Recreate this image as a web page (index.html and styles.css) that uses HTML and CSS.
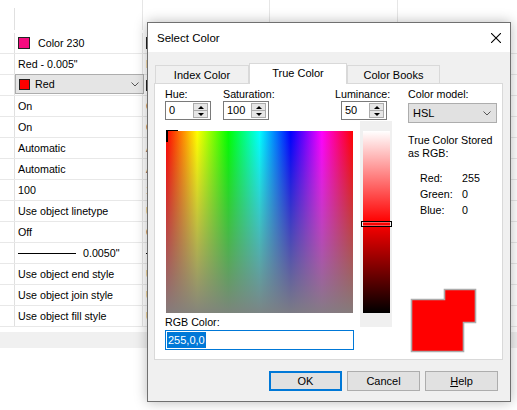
FILE: index.html
```html
<!DOCTYPE html>
<html>
<head>
<meta charset="utf-8">
<title>Select Color</title>
<link rel="stylesheet" href="styles.css">
</head>
<body>
<div class="sheet">
  <div class="head">
    <div class="hc c0"></div><div class="hc c1"></div><div class="hc c2"></div><div class="hc c3"></div><div class="hc c4"></div>
  </div>
  <div class="row"><div class="c0"></div><div class="c1"><span class="sw pink"></span>Color 230</div><div class="c2"><span class="sw pink"></span></div><div class="c3"></div><div class="c4"></div></div>
  <div class="row"><div class="c0"></div><div class="c1">Red - 0.005"</div><div class="c2">R</div><div class="c3"></div><div class="c4"></div></div>
  <div class="row"><div class="c0"></div><div class="c1 ddcell"><div class="dd"><span class="sw red"></span><span class="ddtext">Red</span><svg class="chev" width="8" height="5" viewBox="0 0 8 5"><path d="M0.5 0.5L4 4L7.5 0.5" fill="none" stroke="#555"/></svg></div></div><div class="c2"><span class="sw red"></span></div><div class="c3"></div><div class="c4"></div></div>
  <div class="row"><div class="c0"></div><div class="c1">On</div><div class="c2">O</div><div class="c3"></div><div class="c4"></div></div>
  <div class="row"><div class="c0"></div><div class="c1">On</div><div class="c2">O</div><div class="c3"></div><div class="c4"></div></div>
  <div class="row"><div class="c0"></div><div class="c1">Automatic</div><div class="c2">A</div><div class="c3"></div><div class="c4"></div></div>
  <div class="row"><div class="c0"></div><div class="c1">Automatic</div><div class="c2">A</div><div class="c3"></div><div class="c4"></div></div>
  <div class="row"><div class="c0"></div><div class="c1">100</div><div class="c2">1</div><div class="c3"></div><div class="c4"></div></div>
  <div class="row"><div class="c0"></div><div class="c1">Use object linetype</div><div class="c2">U</div><div class="c3"></div><div class="c4"></div></div>
  <div class="row"><div class="c0"></div><div class="c1">Off</div><div class="c2">O</div><div class="c3"></div><div class="c4"></div></div>
  <div class="row"><div class="c0"></div><div class="c1"><span class="lw"></span>0.0050"</div><div class="c2"><span class="lw"></span></div><div class="c3"></div><div class="c4"></div></div>
  <div class="row"><div class="c0"></div><div class="c1">Use object end style</div><div class="c2">U</div><div class="c3"></div><div class="c4"></div></div>
  <div class="row"><div class="c0"></div><div class="c1">Use object join style</div><div class="c2">U</div><div class="c3"></div><div class="c4"></div></div>
  <div class="row"><div class="c0"></div><div class="c1">Use object fill style</div><div class="c2">U</div><div class="c3"></div><div class="c4"></div></div>
  <div class="band"></div>
</div>

<div class="dlg">
  <div class="titlebar">
    <span class="title">Select Color</span>
    <svg class="close" width="10" height="10" viewBox="0 0 10 10"><path d="M0 0L10 10M10 0L0 10" stroke="#000" stroke-width="1.1"/></svg>
  </div>
  <div class="dbody">
    <div class="tabs">
      <div class="tab t1">Index Color</div>
      <div class="tab sel">True Color</div>
      <div class="tab t3">Color Books</div>
    </div>
    <div class="panel">
      <div class="leftcol">
        <div class="spins">
          <div class="fld hue"><div class="lbl">Hue:</div><div class="spin"><span class="val">0</span><span class="btns"><i class="up"></i><i class="dn"></i></span></div></div>
          <div class="fld sat"><div class="lbl">Saturation:</div><div class="spin"><span class="val">100</span><span class="btns"><i class="up"></i><i class="dn"></i></span></div></div>
          <div class="fld lum"><div class="lbl">Luminance:</div><div class="spin"><span class="val">50</span><span class="btns"><i class="up"></i><i class="dn"></i></span></div></div>
        </div>
        <div class="pick">
          <div class="specol">
            <div class="spectrum"><span class="cursor"></span></div>
            <div class="lbl rgblbl">RGB Color:</div>
            <div class="rgbin"><span class="selt">255,0,0</span></div>
          </div>
          <div class="lumframe"><div class="lumbar"><span class="lummark"></span></div></div>
        </div>
      </div>
      <div class="rightcol">
        <div class="lbl">Color model:</div>
        <div class="combo"><span>HSL</span><svg class="chev" width="8" height="5" viewBox="0 0 8 5"><path d="M0.5 0.5L4 4L7.5 0.5" fill="none" stroke="#555"/></svg></div>
        <div class="stored">True Color Stored<br>as RGB:</div>
        <div class="rgbvals">
          <span>Red:</span><span>255</span>
          <span>Green:</span><span>0</span>
          <span>Blue:</span><span>0</span>
        </div>
        <svg class="swatch" width="67" height="65" viewBox="0 0 67 65"><polygon points="1.5,11.5 34.5,11.5 34.5,1.5 65.5,1.5 65.5,34.5 53.5,34.5 53.5,63.5 1.5,63.5" fill="#ff0000" stroke="#ababab" stroke-width="1.6"/></svg>
      </div>
    </div>
    <div class="btnrow">
      <button class="btn def">OK</button>
      <button class="btn">Cancel</button>
      <button class="btn"><u>H</u>elp</button>
    </div>
  </div>
</div>
</body>
</html>
```

FILE: styles.css
```css
* { box-sizing: border-box; }
html, body { margin: 0; padding: 0; background: #fff; }
body {
  width: 517px;
  height: 410px;
  overflow: hidden;
  position: relative;
  font-family: "Liberation Sans", Arial, sans-serif;
  font-size: 10.7px;
  color: #000;
}

/* background property sheet */
.sheet { width: 517px; }
.head { display: flex; height: 33px; }
.head .hc { height: 30px; }
.head .c0 { margin-top: 8px; height: 22px; }
.c0 { width: 15px; flex: none; border-right: 1px solid #e0e0e0; }
.c1 { width: 128px; flex: none; border-right: 1px solid #e6e6e6; }
.c2 { width: 127px; flex: none; border-right: 1px solid #e6e6e6; }
.c3 { width: 128px; flex: none; border-right: 1px solid #e6e6e6; }
.c4 { flex: 1; }

.row { display: flex; height: 21px; border-bottom: 1px solid #e8e8e8; }
.row > div { display: flex; align-items: center; padding-left: 3px; white-space: nowrap; overflow: hidden; }
.row > .c0 { padding-left: 0; }
.row > .ddcell { padding-left: 0; overflow: visible; align-items: flex-start; }
.row > .c2 { color: #555; }

.sw { width: 12px; height: 12px; border: 1px solid #222; margin-right: 8px; flex: none; }
.sw.pink { background: #f50c7f; }
.sw.red { background: #ff0000; width: 11px; height: 11px; margin-right: 5px; }

.dd {
  display: flex; align-items: center;
  width: 129px; height: 20px; margin-top: -1px; flex: none;
  background: #e5e5e5; border: 1px solid #adadad;
  padding-left: 3px;
  position: relative; z-index: 1;
}
.dd .sw.red { margin-right: 5px; }
.ddtext { flex: 1; }
.dd .chev { margin-right: 4px; }

.lw { width: 58px; height: 1px; background: #000; margin-right: 7px; flex: none; }

.band { margin-top: 5px; height: 16px; background: #f0f0f0; }

/* dialog */
.dlg {
  position: absolute; left: 147px; top: 22px;
  width: 364px; height: 380px;
  border: 1px solid #707070;
  background: #f0f0f0;
  box-shadow: 0 0 12px rgba(0,0,0,0.28);
  display: flex; flex-direction: column;
  z-index: 5;
}
.titlebar {
  height: 29px; flex: none; background: #fff;
  display: flex; align-items: center;
  padding-left: 9px; font-size: 11.5px;
}
.close { margin-left: auto; margin-right: 9px; }

.dbody { flex: 1; padding: 11px 7px 0 6px; }
.tabs { display: flex; align-items: flex-end; height: 20px; padding-left: 1px; position: relative; z-index: 1; }
.tab {
  height: 18px; border: 1px solid #d9d9d9; border-bottom: none;
  display: flex; align-items: center; justify-content: center;
  background: #f0f0f0; font-size: 11px;
}
.t1 { width: 94px; }
.t3 { width: 93px; }
.tab.sel { width: 98px; height: 21px; background: #fff; margin-bottom: -1px; padding-bottom: 3px; }

.panel {
  height: 277px; border: 1px solid #d9d9d9; background: #fff;
  display: flex; padding: 4px 0 0 10px;
}
.lbl { line-height: 13px; height: 13px; white-space: nowrap; }

.leftcol { width: 227px; flex: none; }
.spins { display: flex; height: 32px; }
.fld { display: flex; flex-direction: column; }
.hue { width: 58px; }
.sat { width: 112px; }
.lum .spin { margin-left: 6px; }

.spin { width: 46px; height: 19px; border: 1px solid #7a7a7a; background: #fff; display: flex; }
.val { flex: 1; padding-left: 3px; line-height: 17px; font-size: 11px; }
.btns { width: 15px; display: flex; flex-direction: column; margin: 1px 2px 1px 0; }
.btns i { flex: 1; border: 1px solid #acacac; background: #e6e6e6; display: flex; align-items: center; justify-content: center; }
.btns i + i { border-top: none; }
.up::after { content: ""; border-left: 3px solid transparent; border-right: 3px solid transparent; border-bottom: 3px solid #000; }
.dn::after { content: ""; border-left: 3px solid transparent; border-right: 3px solid transparent; border-top: 3px solid #000; }

.pick { display: flex; }
.specol { width: 189px; flex: none; }
.spectrum {
  margin: 11px 0 0 1px; width: 187px; height: 182px; position: relative;
  background:
    linear-gradient(to bottom, rgba(128,128,128,0), rgba(128,128,128,0.96)),
    linear-gradient(to right, #f00 0%, #ff0 16.67%, #0f0 33.33%, #0ff 50%, #00f 66.67%, #f0f 83.33%, #f00 100%);
}
.cursor { position: absolute; left: 0; top: -1px; width: 12px; height: 12px; border-left: 2px solid #000; border-top: 1px solid #000; }
.rgblbl { margin-top: 3px; }
.rgbin {
  margin-top: 1px; width: 189px; height: 20px;
  border: 1px solid #0078d7; padding: 1px; display: flex; font-size: 11px;
}
.selt { background: #0078d7; color: #fff; line-height: 16px; padding: 0 1px; }

.lumframe { margin: 1px 0 0 6px; width: 32px; height: 206px; background: #f0f0f0; padding: 10px 2px 0 3px; flex: none; }
.lumbar { width: 27px; height: 182px; position: relative; background: linear-gradient(to bottom, #fff 0%, #f00 50%, #000 100%); }
.lummark { position: absolute; left: -2px; top: 90px; width: 31px; height: 6px; border: 1px solid #000; box-shadow: inset 0 0 0 1px rgba(255,255,255,0.35); }

.rightcol { margin-left: 16px; width: 89px; flex: none; }
.combo {
  margin-top: 2px; height: 20px; border: 1px solid #adadad; background: #e1e1e1;
  display: flex; align-items: center; padding-left: 4px; font-size: 11px;
}
.combo span { flex: 1; }
.combo .chev { margin-right: 5px; }
.stored { margin-top: 11px; line-height: 13px; }
.rgbvals { margin-top: 10px; padding-left: 12px; display: grid; grid-template-columns: 42px auto; line-height: 16px; }
.swatch { display: block; margin: 70px 0 0 2px; }

.btnrow { display: flex; justify-content: flex-end; gap: 5px; margin-top: 11px; padding-right: 5px; }
.btn {
  width: 73px; height: 20px; padding: 0; margin: 0;
  background: #e1e1e1; border: 1px solid #adadad;
  font: inherit; font-size: 11px; color: #000;
}
.btn.def { border: 2px solid #0078d7; }
```
